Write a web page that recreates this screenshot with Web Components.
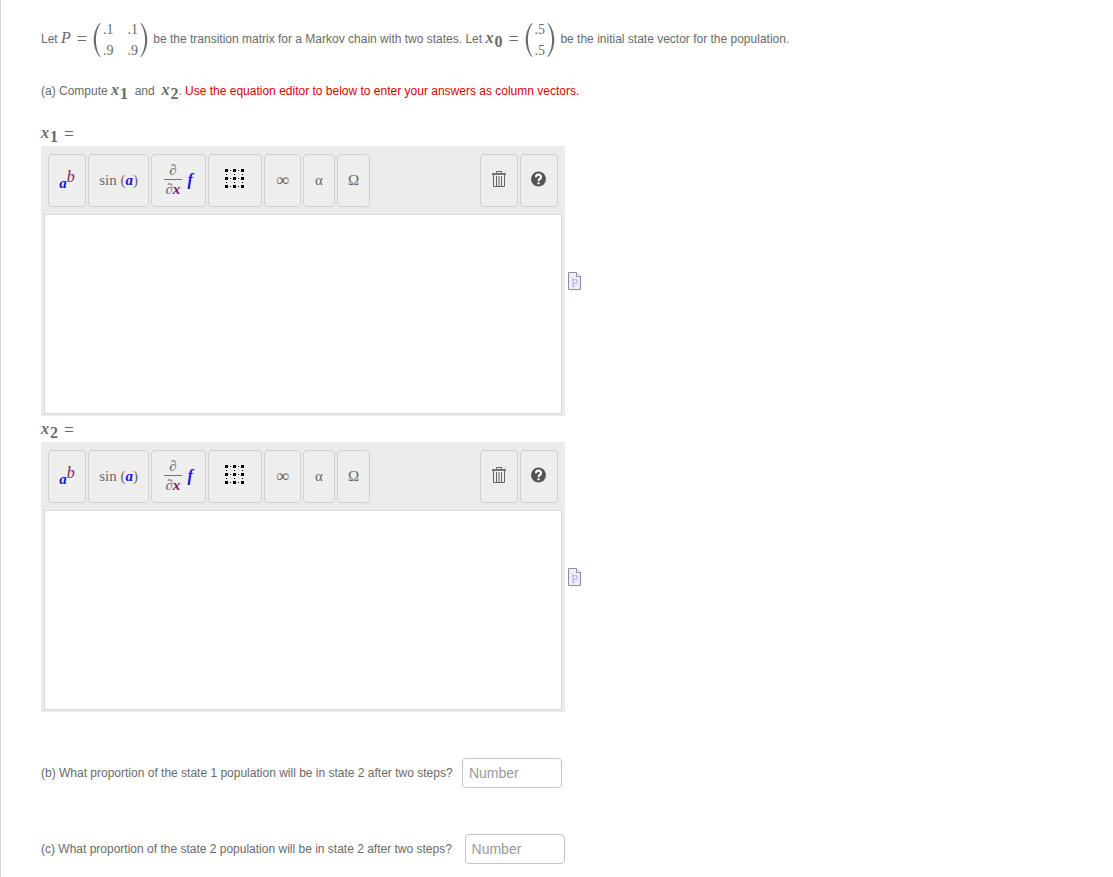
<!DOCTYPE html>
<html lang="en">
<head>
<meta charset="utf-8">
<title>Markov chain question</title>
<style>
  html {
    height: 100%;
  }

  body {
    margin: 0;
    min-height: 100%;
    background: #fff;
    color: #6a6a6a;
    font: 12px/18px "Liberation Sans", Arial, sans-serif;
  }

  .warning {
    color: #dc0000;
  }
</style>
</head>
<body>
<question-page>
  <question-line>Let <math-var plain>P</math-var><math-eq></math-eq><math-matrix columns="2">
    <span>.1</span><span>.1</span><span>.9</span><span>.9</span>
  </math-matrix> be the transition matrix for a Markov chain with two states. Let <math-var sub="0">x</math-var><math-eq></math-eq><math-matrix columns="1">
    <span>.5</span><span>.5</span>
  </math-matrix> be the initial state vector for the population.</question-line>
  <question-line>(a) Compute <math-var sub="1">x</math-var>&nbsp; and &nbsp;<math-var sub="2">x</math-var>. <span class="warning">Use the equation editor to below to enter your answers as column vectors.</span></question-line>
  <equation-editor name="x1"><math-var sub="1">x</math-var><math-eq></math-eq></equation-editor>
  <equation-editor name="x2"><math-var sub="2">x</math-var><math-eq></math-eq></equation-editor>
  <number-question name="b">(b) What proportion of the state 1 population will be in state 2 after two steps?&nbsp;</number-question>
  <number-question name="c">(c) What proportion of the state 2 population will be in state 2 after two steps?&nbsp;&nbsp;</number-question>
</question-page>

<script>
class QuestionPage extends HTMLElement {
  constructor() {
    super();
    this.attachShadow({ mode: 'open' });
  }

  connectedCallback() {
    this.shadowRoot.innerHTML = `
      <style>
        :host {
          display: block;
          box-sizing: border-box;
          min-height: 100vh;
          padding: 19px 40px 12px;
          border-left: 1px solid #d6d6d6;
        }
      </style>
      <main><slot></slot></main>
    `;
  }
}

class QuestionLine extends HTMLElement {
  constructor() {
    super();
    this.attachShadow({ mode: 'open' });
  }

  connectedCallback() {
    this.shadowRoot.innerHTML = `
      <style>
        :host {
          display: block;
          margin-bottom: 20px;
        }

        p {
          margin: 0;
        }
      </style>
      <p><slot></slot></p>
    `;
  }
}

// A variable: bold italic with a subscript, or plain italic
class MathVar extends HTMLElement {
  constructor() {
    super();
    this.attachShadow({ mode: 'open' });
  }

  connectedCallback() {
    const sub = this.getAttribute('sub');

    this.shadowRoot.innerHTML = `
      <style>
        :host {
          display: inline-block;
          font: italic bold 16px/18px "Liberation Serif", "Times New Roman", serif;
        }

        :host([plain]) {
          font-weight: normal;
        }

        sub {
          margin-left: 1px;
          font-style: normal;
          font-size: 16px;
          line-height: 0;
          vertical-align: -4px;
        }
      </style><slot></slot>${sub ? `<sub>${sub}</sub>` : ''}`;
  }
}

class MathEq extends HTMLElement {
  constructor() {
    super();
    this.attachShadow({ mode: 'open' });
  }

  connectedCallback() {
    this.shadowRoot.innerHTML = `
      <style>
        :host {
          display: inline-block;
          margin: 0 6px;
          font: 18px/16px "Liberation Serif", "Times New Roman", serif;
          vertical-align: -2px;
        }
      </style>=`;
  }
}

class MathMatrix extends HTMLElement {
  constructor() {
    super();
    this.attachShadow({ mode: 'open' });
  }

  connectedCallback() {
    const columns = this.getAttribute('columns') || 1;

    this.shadowRoot.innerHTML = `
      <style>
        :host {
          display: inline-flex;
          align-items: center;
          vertical-align: middle;
          margin-right: 2px;
          gap: 2px;
          font: 14px/21px "Liberation Serif", "Times New Roman", serif;
        }

        .cells {
          display: grid;
          grid-template-columns: repeat(${columns}, auto);
          column-gap: 14px;
        }

        svg {
          width: 8px;
          height: 34px;
          fill: currentColor;
        }
      </style>
      <svg viewBox="0 0 8 34" aria-hidden="true"><path d="M7 0C-1.300 8-1.300 26 7 34L7.600 33.400C1.400 26 1.400 8 7.600.600Z"/></svg>
      <div class="cells"><slot></slot></div>
      <svg viewBox="0 0 8 34" aria-hidden="true"><path d="M1 0C9.300 8 9.300 26 1 34L.400 33.400C6.600 26 6.600 8 .400.600Z"/></svg>
    `;
  }
}

class ToolButton extends HTMLElement {
  constructor() {
    super();
    this.attachShadow({ mode: 'open' });
  }

  connectedCallback() {
    this.shadowRoot.innerHTML = `
      <style>
        :host {
          display: block;
        }

        button {
          display: flex;
          align-items: center;
          justify-content: center;
          box-sizing: border-box;
          width: var(--tool-width, 38px);
          height: 53px;
          padding: 0 0 2px;
          border: 1px solid #d0d0d0;
          border-radius: 4px;
          background: #eee;
          color: #6a6a6a;
          font: 15px/18px "Liberation Serif", "Times New Roman", serif;
          cursor: pointer;
        }

        button:hover {
          background: #e2e2e2;
        }
      </style>
      <button type="button" aria-label="${this.getAttribute('label')}"><slot></slot></button>
    `;
  }
}

class EquationEditor extends HTMLElement {
  constructor() {
    super();
    this.attachShadow({ mode: 'open' });
  }

  connectedCallback() {
    this.render();
    this.setupEventListeners();
  }

  render() {
    this.shadowRoot.innerHTML = `
      <style>
        :host {
          display: block;
        }

        label {
          display: block;
          height: 22px;
          padding-top: 4px;
        }

        .row {
          display: flex;
          align-items: center;
          gap: 3px;
        }

        .editor {
          box-sizing: border-box;
          flex: 0 1 524px;
          padding: 0 3px 2px;
          background: #ebebeb;
        }

        .toolbar {
          display: flex;
          flex-wrap: wrap;
          gap: 2px;
          padding: 8px 4px 7px;
        }

        .spacer {
          flex: 1;
        }

        textarea {
          display: block;
          box-sizing: border-box;
          width: 100%;
          height: 200px;
          padding: 8px;
          border: 1px solid #d8d8d8;
          background: #fff;
          color: #333;
          font: 16px/20px "Liberation Serif", serif;
          resize: none;
        }

        i {
          color: #1414dc;
          font-weight: bold;
        }

        i.alt {
          color: #7a147a;
        }

        .power {
          padding-top: 6px;
          font-size: 15px;
        }

        .power sup {
          font-size: 16px;
          line-height: 0;
          vertical-align: 6px;
        }

        .power sup i {
          font-weight: normal;
        }

        .partial {
          display: flex;
          align-items: center;
          gap: 6px;
          font-size: 16px;
        }

        .fraction {
          display: grid;
          justify-items: center;
          font-size: 15px;
        }

        .fraction span:first-child {
          border-bottom: 1px solid #777;
          padding: 0 5px;
        }

        svg {
          display: block;
        }

        .preview {
          flex: none;
        }
      </style>
      <label for="answer"><slot></slot></label>
      <div class="row">
        <div class="editor">
          <div class="toolbar" role="toolbar">
            <tool-button label="Exponent"><span class="power"><i>a</i><sup><i class="alt">b</i></sup></span></tool-button>
            <tool-button label="Functions" style="--tool-width: 61px">sin (<i>a</i>)</tool-button>
            <tool-button label="Calculus" style="--tool-width: 55px">
              <span class="partial">
                <span class="fraction"><span>∂</span><span>∂<i class="alt">x</i></span></span>
                <i>f</i>
              </span>
            </tool-button>
            <tool-button label="Matrix" style="--tool-width: 54px">
              <svg width="20" height="22" viewBox="0 0 20 22" fill="#000">
                <path d="M0 0h3v3H0zM8 0h3v3H8zM16 0h3v3h-3zM0 8h3v3H0zM8 8h3v3H8zM16 8h3v3h-3zM0 16h3v3H0zM8 16h3v3H8zM16 16h3v3h-3z"/>
                <path d="M5 1h1v1H5zM13 1h1v1h-1zM5 9h1v1H5zM13 9h1v1h-1zM5 17h1v1H5zM13 17h1v1h-1zM1 5h1v1H1zM9 5h1v1H9zM17 5h1v1h-1zM1 13h1v1H1zM9 13h1v1H9zM17 13h1v1h-1z"/>
              </svg>
            </tool-button>
            <tool-button label="Symbols" style="--tool-width: 37px"><span style="font-size: 18px">∞</span></tool-button>
            <tool-button label="Greek lowercase" style="--tool-width: 32px">α</tool-button>
            <tool-button label="Greek uppercase" style="--tool-width: 33px">Ω</tool-button>
            <span class="spacer"></span>
            <tool-button class="clear" label="Clear">
              <svg width="14" height="18" viewBox="0 0 14 18" fill="none" stroke="#666">
                <path d="M4.500 2V.500h5V2"/>
                <path d="M0 2h14v2H0z" fill="#777" stroke="none"/>
                <path d="M1.500 4v11.500h11V4M4.500 5v10M7 5v10M9.500 5v10"/>
              </svg>
            </tool-button>
            <tool-button label="Help">
              <svg width="16" height="18" viewBox="0 0 16 18">
                <circle cx="7.500" cy="8" r="7.500" fill="#555"/>
                <path d="M5 6.200C5 2.900 10 2.900 10 6C10 8 7.600 7.900 7.600 10" fill="none" stroke="#fff" stroke-width="2.200"/>
                <path d="M6.500 11.200h2.200v2H6.500z" fill="#fff"/>
              </svg>
            </tool-button>
          </div>
          <textarea id="answer" name="${this.getAttribute('name')}"></textarea>
        </div>
        <svg class="preview" width="14" height="18" viewBox="0 0 14 18">
          <path d="M.500.500h8l4 4v13H.500z" fill="#ececfa" stroke="#8c8ca0"/>
          <path d="M8.500.500v4h4" fill="#fff" stroke="#8c8ca0"/>
          <text x="3" y="15" font-family="Liberation Serif" font-size="13" fill="#b4b4dc">P</text>
        </svg>
      </div>
    `;
  }

  setupEventListeners() {
    const input = this.shadowRoot.querySelector('textarea');

    this.shadowRoot.querySelector('.clear').addEventListener('click', () => {
      input.value = '';
      input.focus();
    });
  }
}

class NumberQuestion extends HTMLElement {
  constructor() {
    super();
    this.attachShadow({ mode: 'open' });
  }

  connectedCallback() {
    this.shadowRoot.innerHTML = `
      <style>
        :host {
          display: flex;
          align-items: center;
          gap: 6px;
          margin-top: 46px;
        }

        input {
          box-sizing: border-box;
          width: 100px;
          height: 30px;
          padding: 4px 6px;
          border: 1px solid #c4c4c4;
          border-radius: 4px;
          background: #fff;
          color: #555;
          font: 14px/20px "Liberation Sans", Arial, sans-serif;
        }

        input::placeholder {
          color: #999;
          opacity: 1;
        }
      </style>
      <label for="number"><slot></slot></label>
      <input id="number" type="text" inputmode="decimal" name="${this.getAttribute('name')}" placeholder="Number">
    `;
  }
}

customElements.define('question-page', QuestionPage);
customElements.define('question-line', QuestionLine);
customElements.define('math-var', MathVar);
customElements.define('math-eq', MathEq);
customElements.define('math-matrix', MathMatrix);
customElements.define('tool-button', ToolButton);
customElements.define('equation-editor', EquationEditor);
customElements.define('number-question', NumberQuestion);
</script>
</body>
</html>
